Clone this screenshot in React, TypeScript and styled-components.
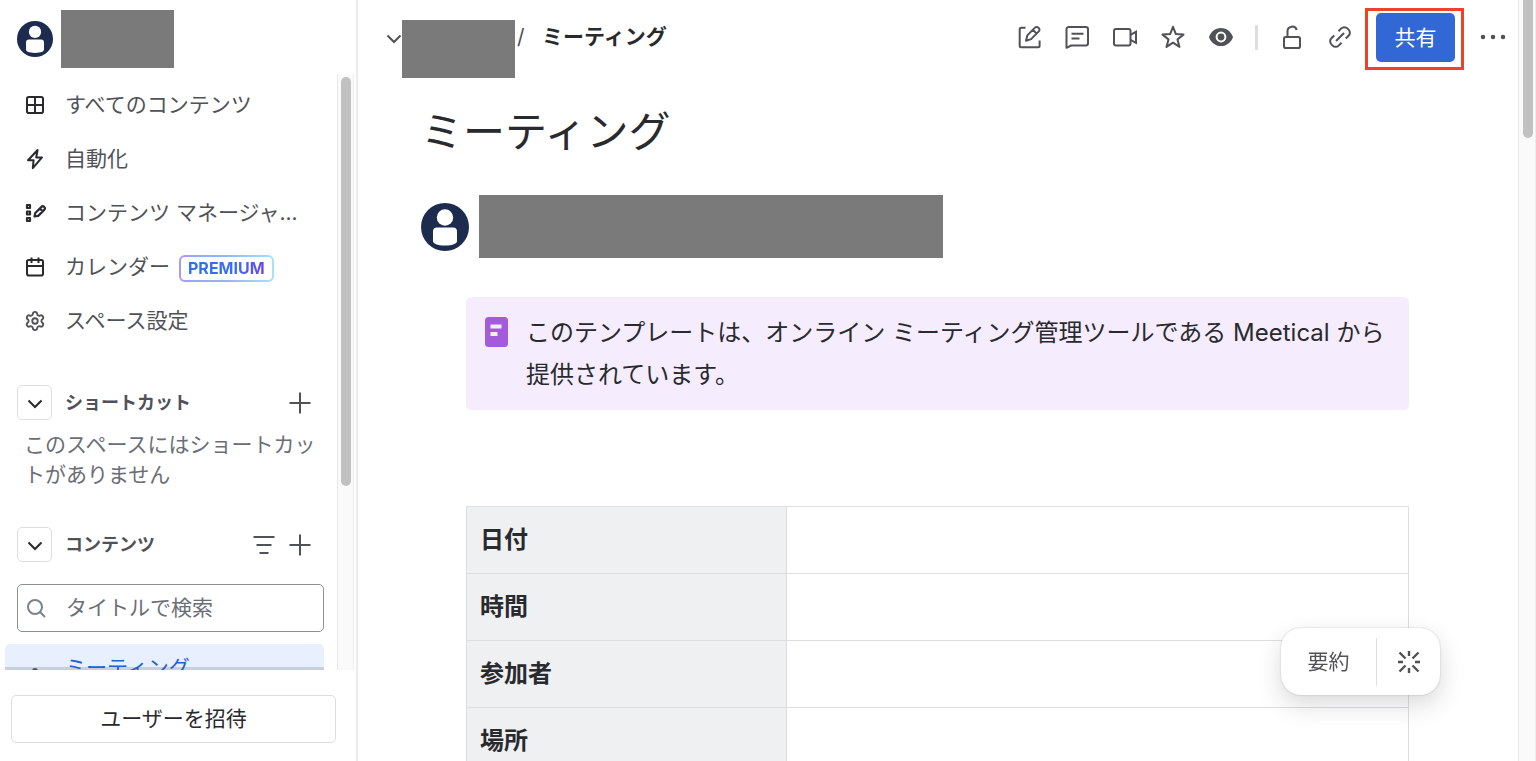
import React from "react";
import styled, { createGlobalStyle, css } from "styled-components";
import { Settings } from "lucide-react";

const GlobalStyle = createGlobalStyle`
  *, *::before, *::after { box-sizing: border-box; }
  body {
    margin: 0;
    background: #fff;
    color: #292a2e;
    font-family: Inter, "Noto Sans CJK JP", sans-serif;
    font-size: 21px;
    line-height: 30px;
  }
  button, input { font: inherit; color: inherit; }
  h1, h2, p, ul { margin: 0; padding: 0; }
  ul { list-style: none; }
  a { color: inherit; text-decoration: none; }
`;

const Svg = styled.svg`
  display: block;
  flex: none;
  fill: none;
  stroke: currentColor;
  stroke-width: 2;
`;

const Shell = styled.div`
  display: flex;
  height: 100vh;
  overflow: hidden;
`;

const Sidebar = styled.aside`
  display: flex;
  flex-direction: column;
  flex: none;
  width: 358px;
  border-right: 2px solid #ebebed;
  color: #505258;
`;

const SpaceHeader = styled.div`
  display: flex;
  align-items: center;
  gap: 8px;
  height: 74px;
  padding: 3px 17px 0;
  flex: none;
`;

const Mask = styled.div<{ $wide?: boolean }>`
  flex: none;
  width: ${(p) => (p.$wide ? 464 : 113)}px;
  height: ${(p) => (p.$wide ? 63 : 58)}px;
  background: #7a7a7a;
`;

const ScrollArea = styled.div`
  position: relative;
  display: flex;
  flex: 1;
  min-height: 0;
  padding-right: 2px;
  overflow: hidden;
`;

const ScrollContent = styled.div`
  flex: 1;
  min-width: 0;
  padding: 4px 13px 0 5px;
`;

const ScrollShade = styled.div`
  position: absolute;
  left: 5px;
  right: 32px;
  bottom: 0;
  height: 3px;
  background: rgba(80, 90, 105, 0.22);
`;

const Track = styled.div<{ $page?: boolean }>`
  flex: none;
  width: ${(p) => (p.$page ? 18 : 17)}px;
  padding: ${(p) => (p.$page ? "0 2px 0 4px" : "3px 2px 0 3px")};
  background: #fafafa;
  border-left: 1px solid #e8e8e8;
  border-right: 1px solid #ededed;
`;

const Thumb = styled.div<{ $page?: boolean }>`
  height: ${(p) => (p.$page ? 138 : 409)}px;
  border-radius: ${(p) => (p.$page ? "0 0 5px 5px" : "5px")};
  background: #c1c1c1;
`;

const NavLink = styled.a`
  display: flex;
  align-items: center;
  height: 54px;
  padding: 0 12px 0 18px;
  gap: 18px;
`;

const NavIcon = styled.span<{ $muted?: boolean }>`
  display: flex;
  align-items: center;
  justify-content: center;
  width: 24px;
  height: 24px;
  color: ${(p) => (p.$muted ? "#505258" : "#292a2e")};
`;

const NavLabel = styled.span`
  overflow: hidden;
  white-space: nowrap;
`;

const Premium = styled.span`
  margin: 2px 0 0 -9px;
  padding: 0 7px;
  border: 2px solid transparent;
  border-radius: 6px;
  background: linear-gradient(#fff, #fff) padding-box,
    linear-gradient(90deg, #a79bf3, #8fb8fb 50%, #a5e3f8) border-box;
  font-size: 16px;
  line-height: 23px;
  font-weight: 700;
`;

const PremiumText = styled.span`
  background: linear-gradient(90deg, #2f6fee 0%, #3a6cf5 60%, #6a45e8 100%);
  background-clip: text;
  color: transparent;
`;

const Section = styled.section`
  padding-top: 36px;
`;

const SectionHead = styled.div`
  display: flex;
  align-items: center;
  padding: 0 12px;
  height: 37px;
`;

const SectionTitle = styled.h2`
  flex: 1;
  padding-left: 13px;
  font-size: 18px;
  line-height: 30px;
  font-weight: 700;
`;

const plainButton = css`
  display: flex;
  align-items: center;
  justify-content: center;
  padding: 0;
  border: 0;
  background: none;
`;

const Toggle = styled.button`
  ${plainButton}
  width: 35px;
  height: 35px;
  border: 1px solid #dddee1;
  border-radius: 5px;
  color: #292a2e;
`;

const SmallButton = styled.button`
  ${plainButton}
  width: 36px;
  height: 36px;
  &:last-child { margin-right: -6px; }
`;

const EmptyNote = styled.p`
  padding: 9px 0 0 19px;
  color: #6b6e76;
`;

const SearchBox = styled.label`
  display: flex;
  align-items: center;
  gap: 19px;
  height: 48px;
  margin: 21px 0 12px 12px;
  padding: 0 7px;
  border: 1px solid #8c8f97;
  border-radius: 5px;
  color: #7d818a;
`;

const SearchInput = styled.input`
  flex: 1;
  min-width: 0;
  padding: 0;
  border: 0;
  outline: 0;
  background: none;
  &::placeholder { color: #6b6e76; opacity: 1; }
`;

const PageLink = styled.a`
  display: flex;
  align-items: center;
  gap: 18px;
  height: 48px;
  padding-left: 18px;
  border-radius: 5px;
  background: #e9f0fd;
  color: #2460d3;
`;

const SidebarFooter = styled.div`
  flex: none;
  height: 91px;
  padding: 25px 20px 0 11px;
`;

const InviteButton = styled.button`
  width: 100%;
  height: 48px;
  padding: 0;
  border: 1px solid #dddee1;
  border-radius: 5px;
  background: #fff;
  color: #292a2e;
`;

const Main = styled.main`
  flex: 1;
  min-width: 0;
`;

const TopBar = styled.header`
  display: flex;
  justify-content: space-between;
  height: 78px;
  padding: 8px 0 0 27px;
  color: #505258;
`;

const Crumbs = styled.nav`
  display: flex;
  line-height: 58px;
  ${Mask} { margin: 12px 2px 0 0; }
`;

const CrumbToggle = styled.button`
  ${plainButton}
  width: 17px;
  height: 60px;
`;

const Slash = styled.span`
  width: 25px;
`;

const Current = styled.a`
  color: #292a2e;
  font-weight: 600;
`;

const Toolbar = styled.div`
  display: flex;
  padding-right: 1px;
`;

const IconButton = styled.button`
  ${plainButton}
  width: 48px;
  height: 58px;
`;

const Divider = styled.div`
  width: 3px;
  height: 25px;
  margin: 17px 10px;
  background: #dddee1;
`;

const ShareFrame = styled.div`
  height: 62px;
  margin: 0 5px 0 1px;
  padding: 2px 6px 5px 8px;
  border: 3px solid #e9432a;
`;

const ShareButton = styled.button`
  width: 79px;
  height: 49px;
  padding: 0;
  border: 0;
  border-radius: 5px;
  background: #3267d6;
  color: #fff;
`;

const TitleBlock = styled.div`
  padding: 26px 63px 0;
`;

const Title = styled.h1`
  font-size: 42px;
  line-height: 56px;
  font-weight: 400;
`;

const Byline = styled.div`
  display: flex;
  align-items: center;
  gap: 10px;
  margin-top: 35px;
`;

const Article = styled.article`
  padding: 39px 109px 0 108px;
  font-size: 24px;
`;

const Panel = styled.div`
  display: flex;
  gap: 18px;
  padding: 15px 12px 14px 18px;
  border-radius: 5px;
  background: #f5edfd;
  line-height: 42px;
  svg { margin-top: 5px; }
`;

const Table = styled.table`
  width: 100%;
  margin-top: 96px;
  border-collapse: collapse;
  table-layout: fixed;
  th, td {
    height: 67px;
    padding: 0 13px;
    border: 1px solid #dddee1;
    line-height: 36px;
    text-align: left;
  }
  th {
    width: 34%;
    background: #eff0f2;
    font-weight: 700;
  }
`;

const Floating = styled.div`
  position: fixed;
  right: 96px;
  bottom: 66px;
  display: flex;
  align-items: center;
  height: 67px;
  border-radius: 20px;
  background: #fff;
  color: #505258;
  box-shadow: 0 0 2px rgba(30, 31, 33, 0.25), 0 10px 24px rgba(30, 31, 33, 0.16);
`;

const FloatButton = styled.button<{ $icon?: boolean }>`
  ${plainButton}
  width: ${(p) => (p.$icon ? 64 : 95)}px;
  height: 48px;
  border-left: ${(p) => (p.$icon ? "1px solid #dddee1" : "0")};
`;

const Avatar = ({ size }: { size: number }) => (
  <Svg width={size} height={size} viewBox="0 0 48 48" aria-hidden="true">
    <circle cx="24" cy="24" r="24" fill="#1c2b4e" stroke="none" />
    <circle cx="24" cy="14.5" r="8.2" fill="#fff" stroke="none" />
    <path
      d="M12 28.5a4 4 0 0 1 4-4h16a4 4 0 0 1 4 4V38c0 2.600-4 4.500-12 4.500S12 40.600 12 38z"
      fill="#fff"
      stroke="none"
    />
  </Svg>
);

const Chevron = ({ size = 20 }: { size?: number }) => (
  <Svg width={size} height={size} viewBox="0 0 20 20">
    <path d="M3.500 7.500 10 14 16.500 7.500" />
  </Svg>
);

const Plus = () => (
  <Svg width="24" height="24" viewBox="0 0 24 24">
    <path d="M12 1.500v21M1.500 12h21" />
  </Svg>
);

const NavSvg = ({ children }: { children: React.ReactNode }) => (
  <Svg width="24" height="24" viewBox="-1 -1 24 24">{children}</Svg>
);

const navItems = [
  {
    label: "すべてのコンテンツ",
    icon: (
      <NavSvg>
        <rect x="3" y="3" width="16" height="16" rx="1.800" />
        <path d="M11 3v16M3 11h16" />
      </NavSvg>
    ),
  },
  {
    label: "自動化",
    icon: (
      <NavSvg>
        <path d="M13.600 2 4 12.200h5.600L8.800 20.200 18 9.400h-5.800z" strokeLinejoin="round" />
      </NavSvg>
    ),
  },
  {
    label: "コンテンツ マネージャ...",
    icon: (
      <NavSvg>
        <path d="M3 3h3v3h-3zM3 9.500h3v3h-3zM3 16h3v3h-3z" strokeWidth="2.200" strokeLinejoin="round" />
        <path
          d="M10.500 14.500l.8-3.500 6-6a2 2 0 0 1 2.900 2.900l-6 6zM15.800 6.500l2.800 2.800"
          strokeWidth="2.200"
          strokeLinejoin="round"
        />
      </NavSvg>
    ),
  },
  {
    label: "カレンダー",
    premium: true,
    icon: (
      <NavSvg>
        <rect x="3" y="4" width="16" height="15.500" rx="1.800" />
        <path d="M3 10h16M7.500 1.500v5.500M14.500 1.500v5.500" />
      </NavSvg>
    ),
  },
  {
    label: "スペース設定",
    muted: true,
    icon: <Settings size={22} strokeWidth={2} />,
  },
];

const tools = [
  {
    label: "編集",
    icon: (
      <>
        <path d="M8.500 2.800H4.200a1.500 1.500 0 0 0-1.500 1.500v16.400a1.500 1.500 0 0 0 1.500 1.500h16.900a1.500 1.500 0 0 0 1.500-1.500V15.500" />
        <path d="m9 15.800 1.300-5.400 7.700-7.800a2.300 2.300 0 0 1 3.300 0l.5.500a2.300 2.300 0 0 1 0 3.300l-7.700 7.700zM15.800 4.800l3.800 3.800" strokeLinejoin="round" />
      </>
    ),
  },
  {
    label: "コメント",
    icon: (
      <>
        <path d="M1.500 22.800V4.300a2.300 2.300 0 0 1 2.300-2.300h16.900A2.300 2.300 0 0 1 23 4.300v13.900a2.300 2.300 0 0 1-2.300 2.300H6.200z" strokeLinejoin="round" />
        <path d="M6.500 8.700h12M6.500 13.500h8" />
      </>
    ),
  },
  {
    label: "会議",
    icon: (
      <>
        <rect x="1" y="4" width="16.500" height="16.500" rx="2" />
        <path d="m17.500 9.800 5.500-3v11l-5.500-3" />
      </>
    ),
  },
  {
    label: "スター",
    icon: <path d="m12 1.800 2.900 7.300 7.600.5-6 4.800 2 7.500-6.500-4.200-6.500 4.200 2-7.500-6-4.800 7.600-.5z" strokeLinejoin="round" />,
  },
  {
    label: "ウォッチ",
    icon: (
      <>
        <path d="M12 3C6 3 2 7.200.3 11.200a2 2 0 0 0 0 1.700C2 16.900 6 21 12 21s10-4.100 11.700-8.100a2 2 0 0 0 0-1.700C22 7.200 18 3 12 3z" fill="currentColor" stroke="none" />
        <circle cx="12" cy="12" r="4.400" stroke="#fff" strokeWidth="2" />
      </>
    ),
  },
];

const rows = ["日付", "時間", "参加者", "場所"];

export default function App() {
  return (
    <>
      <GlobalStyle />
      <Shell>
        <Sidebar>
          <SpaceHeader>
            <Avatar size={36} />
            <Mask />
          </SpaceHeader>
          <ScrollArea>
            <ScrollContent>
              <ul>
                {navItems.map((item) => (
                  <li key={item.label}>
                    <NavLink href="#">
                      <NavIcon $muted={item.muted}>{item.icon}</NavIcon>
                      <NavLabel>{item.label}</NavLabel>
                      {item.premium && (
                        <Premium>
                          <PremiumText>PREMIUM</PremiumText>
                        </Premium>
                      )}
                    </NavLink>
                  </li>
                ))}
              </ul>
              <Section>
                <SectionHead>
                  <Toggle aria-label="ショートカットを折りたたむ"><Chevron /></Toggle>
                  <SectionTitle>ショートカット</SectionTitle>
                  <SmallButton aria-label="ショートカットを追加"><Plus /></SmallButton>
                </SectionHead>
                <EmptyNote>このスペースにはショートカットがありません</EmptyNote>
              </Section>
              <Section>
                <SectionHead>
                  <Toggle aria-label="コンテンツを折りたたむ"><Chevron /></Toggle>
                  <SectionTitle>コンテンツ</SectionTitle>
                  <SmallButton aria-label="並べ替え">
                    <Svg width="24" height="24" viewBox="0 0 24 24">
                      <path d="M1.500 4h21M4.500 12h15M7.500 20h9" />
                    </Svg>
                  </SmallButton>
                  <SmallButton aria-label="コンテンツを追加"><Plus /></SmallButton>
                </SectionHead>
              </Section>
              <SearchBox>
                <Svg width="22" height="22" viewBox="0 0 22 22">
                  <circle cx="10" cy="10" r="7" />
                  <path d="m15 15 5 5" />
                </Svg>
                <SearchInput type="search" placeholder="タイトルで検索" aria-label="タイトルで検索" />
              </SearchBox>
              <PageLink href="#">
                <Svg width="24" height="24" viewBox="0 0 24 24">
                  <circle cx="12" cy="15" r="3" fill="#505258" stroke="none" />
                </Svg>
                ミーティング
              </PageLink>
            </ScrollContent>
            <Track><Thumb /></Track>
            <ScrollShade />
          </ScrollArea>
          <SidebarFooter>
            <InviteButton>ユーザーを招待</InviteButton>
          </SidebarFooter>
        </Sidebar>

        <Main>
          <TopBar>
            <Crumbs>
              <CrumbToggle aria-label="階層を表示"><Chevron /></CrumbToggle>
              <Mask />
              <Slash>/</Slash>
              <Current href="#">ミーティング</Current>
            </Crumbs>
            <Toolbar>
              {tools.map((tool) => (
                <IconButton key={tool.label} aria-label={tool.label}>
                  <Svg width="24" height="24" viewBox="0 0 24 24">{tool.icon}</Svg>
                </IconButton>
              ))}
              <Divider />
              <IconButton aria-label="制限">
                <Svg width="24" height="24" viewBox="0 0 24 24">
                  <rect x="4" y="12" width="16" height="11" rx="1.800" />
                  <path d="M7.500 12V6.500a4.700 4.700 0 0 1 9.200-1.500" />
                </Svg>
              </IconButton>
              <IconButton aria-label="リンクをコピー">
                <Svg width="24" height="24" viewBox="0 0 24 24">
                  <path d="m10.500 6.200 2.800-2.800a4.300 4.300 0 0 1 6.100 0l1.200 1.200a4.300 4.300 0 0 1 0 6.100l-2.800 2.800M13.500 17.800l-2.800 2.800a4.300 4.300 0 0 1-6.100 0l-1.200-1.200a4.300 4.300 0 0 1 0-6.100l2.800-2.800M8 16l8-8" />
                </Svg>
              </IconButton>
              <ShareFrame>
                <ShareButton>共有</ShareButton>
              </ShareFrame>
              <IconButton aria-label="その他の操作">
                <Svg width="26" height="24" viewBox="0 0 26 24">
                  <path d="M3 12h.01M13 12h.01M23 12h.01" strokeWidth="4.500" strokeLinecap="round" />
                </Svg>
              </IconButton>
            </Toolbar>
          </TopBar>
          <TitleBlock>
            <Title>ミーティング</Title>
            <Byline>
              <Avatar size={48} />
              <Mask $wide />
            </Byline>
          </TitleBlock>
          <Article>
            <Panel>
              <Svg width="24" height="30" viewBox="0 0 24 30">
                <rect width="23" height="30" x="1" rx="3.500" fill="#a35bdb" stroke="none" />
                <path d="M6.500 9.500h11M6.500 17h7" stroke="#f5edfd" strokeWidth="4" strokeLinecap="butt" />
              </Svg>
              <p>このテンプレートは、オンライン ミーティング管理ツールである Meetical から提供されています。</p>
            </Panel>
            <Table>
              <tbody>
                {rows.map((row) => (
                  <tr key={row}>
                    <th scope="row">{row}</th>
                    <td />
                  </tr>
                ))}
              </tbody>
            </Table>
          </Article>
        </Main>
        <Track $page><Thumb $page /></Track>
      </Shell>
      <Floating>
        <FloatButton>要約</FloatButton>
        <FloatButton $icon aria-label="AI">
          <Svg width="24" height="24" viewBox="0 0 24 24">
            <path d="M12 1v5M12 18v5M1 12h5M18 12h5M2.500 2.500l6 6M21.500 2.500l-6 6M2.500 21.500l6-6M21.500 21.500l-6-6" strokeWidth="2.400" />
          </Svg>
        </FloatButton>
      </Floating>
    </>
  );
}
